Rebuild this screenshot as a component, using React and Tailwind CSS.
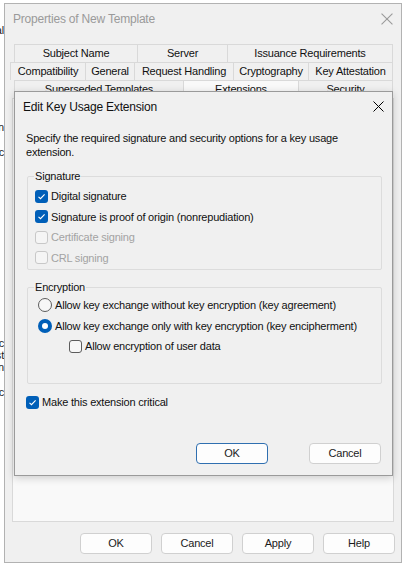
import React from 'react';

const font = "[font-family:'Liberation_Sans',Arial,sans-serif] text-[11px] tracking-[-0.2px]";

const CloseIcon = ({ color = '#000', size = 11 }) => (
  <svg width={size} height={size} viewBox="0 0 11 11">
    <path d="M0.5 0.5 L10.5 10.5 M10.5 0.5 L0.5 10.5" stroke={color} strokeWidth="1" fill="none" />
  </svg>
);

const CheckBox = ({ checked, disabled }) => {
  if (checked) {
    return (
      <span className="w-[13px] h-[13px] rounded-[3px] bg-[#005fb8] flex items-center justify-center shrink-0">
        <svg width="9" height="9" viewBox="0 0 9 9">
          <path d="M1.5 4.8 L3.5 6.7 L7.6 2.3" stroke="#fff" strokeWidth="1.1" fill="none" />
        </svg>
      </span>
    );
  }
  return (
    <span
      className={`w-[13px] h-[13px] rounded-[3px] border shrink-0 ${
        disabled ? 'border-[#c8c8c8] bg-[#f5f5f5]' : 'border-[#5c5c5c] bg-[#f7f7f7]'
      }`}
    />
  );
};

const Radio = ({ checked }) =>
  checked ? (
    <span className="w-[14px] h-[14px] rounded-full bg-[#005fb8] flex items-center justify-center shrink-0">
      <span className="w-[6px] h-[6px] rounded-full bg-white" />
    </span>
  ) : (
    <span className="w-[14px] h-[14px] rounded-full border border-[#5c5c5c] bg-[#f7f7f7] shrink-0" />
  );

const Button = ({ children, primary }) => (
  <div
    className={`w-[72px] h-[21px] rounded-[4px] flex items-center justify-center text-[#1b1b1b] bg-[#fdfdfd] border ${
      primary ? 'border-[#2f6fb0]' : 'border-[#d0d0d0]'
    }`}
  >
    {children}
  </div>
);

const Tab = ({ label, w, last, selected }) => (
  <div
    className={`h-full flex items-center justify-center border-t border-l border-[#d9d9d9] whitespace-nowrap ${
      last ? 'border-r' : ''
    } ${selected ? 'bg-[#f9f9f9] -mt-[2px] h-[20px]' : ''} ${w}`}
  >
    {label}
  </div>
);

const Option = ({ box, children, disabled, className = '' }) => (
  <div className={`h-[20.5px] flex items-center ${className}`}>
    {box}
    <span className={`ml-[3px] whitespace-nowrap ${disabled ? 'text-[#a3a3a3]' : 'text-[#111]'}`}>{children}</span>
  </div>
);

export default function App() {
  return (
    <div className={`w-[407px] h-[565px] bg-white flex overflow-hidden text-[#111] ${font}`}>
      {/* window behind, only a sliver shows */}
      <div className="w-[4px] shrink-0 overflow-hidden flex flex-col items-end text-[#222] text-[11px] leading-[12px]">
        <div className="mt-[24px] whitespace-nowrap">General</div>
        <div className="mt-[85px] whitespace-nowrap">Version</div>
        <div className="mt-[13px] whitespace-nowrap">Generic</div>
        <div className="mt-[179px] whitespace-nowrap">Generic</div>
        <div className="whitespace-nowrap">Rest</div>
        <div className="whitespace-nowrap">Version</div>
        <div className="mt-[13px] whitespace-nowrap">Generic</div>
      </div>

      {/* Properties window */}
      <div className="mt-[3px] w-[398px] h-[560px] shrink-0 bg-[#f0f0f0] border border-[#b2b2b2] relative flex flex-col">
        <div className="h-[30px] flex items-center justify-between pl-[8px] pr-[8px]">
          <span className="text-[#9a9a9a] text-[12px]">Properties of New Template</span>
          <CloseIcon color="#9a9a9a" size={12} />
        </div>

        {/* tab rows */}
        <div className="mt-[10px] flex flex-col">
          <div className="h-[18px] flex ml-[9px]">
            <Tab label="Subject Name" w="w-[123px]" />
            <Tab label="Server" w="w-[90px]" />
            <Tab label="Issuance Requirements" w="w-[166px]" last />
          </div>
          <div className="h-[18px] flex ml-[5px]">
            <Tab label="Compatibility" w="w-[75px]" />
            <Tab label="General" w="w-[49px]" />
            <Tab label="Request Handling" w="w-[99px]" />
            <Tab label="Cryptography" w="w-[75px]" />
            <Tab label="Key Attestation" w="w-[85px]" last />
          </div>
          <div className="h-[18px] flex items-end ml-[9px]">
            <Tab label="Superseded Templates" w="w-[169px] h-[18px]" />
            <Tab label="Extensions" w="w-[115px]" selected />
            <Tab label="Security" w="w-[95px] h-[18px]" last />
          </div>
        </div>

        {/* tab page */}
        <div className="ml-[7px] w-[382px] h-[424px] bg-[#f9f9f9] border border-[#d9d9d9]" />

        {/* bottom buttons */}
        <div className="mt-[11px] flex justify-end gap-[9px] pr-[6px]">
          <Button>OK</Button>
          <Button>Cancel</Button>
          <Button>Apply</Button>
          <Button>Help</Button>
        </div>

        {/* Edit Key Usage Extension dialog on top */}
        <div className="absolute left-[9px] top-[87px] w-[379px] h-[385px] bg-[#f0f0f0] border border-[#9a9a9a] shadow-[0_2px_8px_rgba(0,0,0,0.18)] flex flex-col">
          <div className="h-[29px] flex items-center justify-between pl-[8px] pr-[8px]">
            <span className="text-[12px] text-[#111]">Edit Key Usage Extension</span>
            <CloseIcon />
          </div>

          <div className="px-[11px] pt-[10px] flex flex-col">
            <p className="leading-[14px]">
              Specify the required signature and security options for a key usage
              <br />
              extension.
            </p>

            <fieldset className="mt-[10px] ml-[1px] mr-[-1px] border border-[#dcdcdc] rounded-[2px] px-[7px] pb-[1px] h-[101px]">
              <legend className="px-[1px] leading-[14px] ml-[-1px]">Signature</legend>
              <div className="pt-[3px] flex flex-col">
                <Option box={<CheckBox checked />}>Digital signature</Option>
                <Option box={<CheckBox checked />}>Signature is proof of origin (nonrepudiation)</Option>
                <Option box={<CheckBox disabled />} disabled>Certificate signing</Option>
                <Option box={<CheckBox disabled />} disabled>CRL signing</Option>
              </div>
            </fieldset>

            <fieldset className="mt-[10px] ml-[1px] mr-[-1px] border border-[#dcdcdc] rounded-[2px] px-[7px] h-[104px]">
              <legend className="px-[1px] leading-[14px] ml-[-1px]">Encryption</legend>
              <div className="pt-[1px] pl-[3px] flex flex-col">
                <Option box={<Radio />}>Allow key exchange without key encryption (key agreement)</Option>
                <Option box={<Radio checked />}>Allow key exchange only with key encryption (key encipherment)</Option>
                <Option box={<CheckBox />} className="pl-[31px]">Allow encryption of user data</Option>
              </div>
            </fieldset>

            <Option box={<CheckBox checked />} className="mt-[8px]">Make this extension critical</Option>

            <div className="mt-[30px] flex justify-end gap-[41px]">
              <Button primary>OK</Button>
              <Button>Cancel</Button>
            </div>
          </div>
        </div>
      </div>
    </div>
  );
}
